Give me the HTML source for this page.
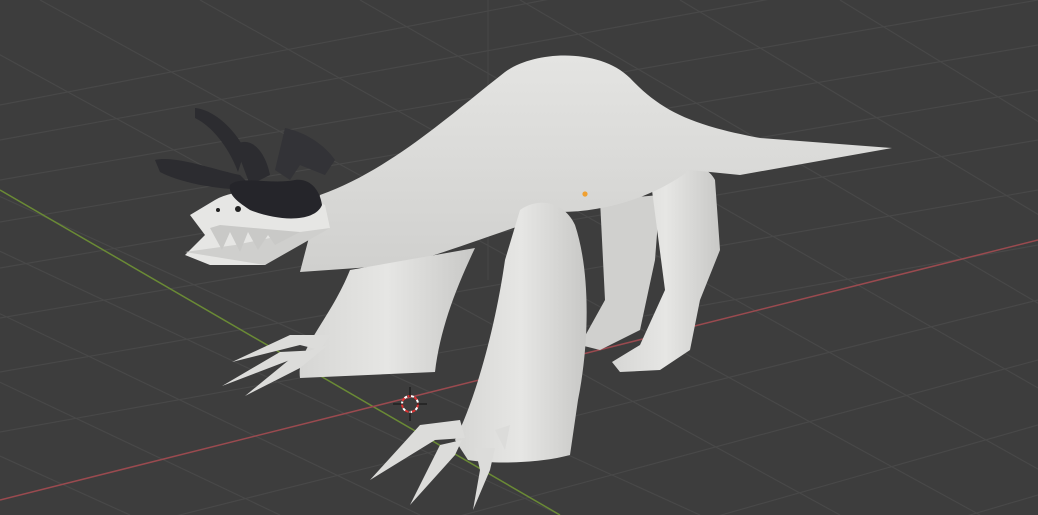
<!DOCTYPE html>
<html><head><meta charset="utf-8"><style>
html,body{margin:0;padding:0;background:#3d3d3d;overflow:hidden;width:1038px;height:515px}
svg{display:block;position:absolute;left:0;top:0}
</style></head><body>
<svg width="1038" height="515" viewBox="0 0 1038 515" xmlns="http://www.w3.org/2000/svg">
<defs>
<linearGradient id="b" x1="0" y1="0" x2="0" y2="1">
<stop offset="0" stop-color="#e4e4e2"/><stop offset="1" stop-color="#d0d0ce"/></linearGradient>
<linearGradient id="l" x1="0" y1="0" x2="1" y2="0">
<stop offset="0" stop-color="#d6d6d4"/><stop offset="0.5" stop-color="#e6e6e4"/><stop offset="1" stop-color="#c8c8c6"/></linearGradient>
</defs>
<rect width="1038" height="515" fill="#3d3d3d"/>
<g stroke="#484848" stroke-width="1.2" fill="none">
<line x1="0" y1="105" x2="1038" y2="-95"/>
<line x1="0" y1="140" x2="1038" y2="-50"/>
<line x1="0" y1="180" x2="1038" y2="0"/>
<line x1="0" y1="222" x2="1038" y2="45"/>
<line x1="0" y1="268" x2="1038" y2="90"/>
<line x1="0" y1="318" x2="1038" y2="140"/>
<line x1="0" y1="372" x2="1038" y2="190"/>
<line x1="0" y1="432" x2="1038" y2="245"/>
<line x1="0" y1="560" x2="1038" y2="300"/>
<line x1="0" y1="640" x2="1038" y2="360"/>
<line x1="0" y1="720" x2="1038" y2="425"/>
<line x1="0" y1="800" x2="1038" y2="495"/>
<line x1="0" y1="880" x2="1038" y2="570"/>
<line x1="-300" y1="60" x2="700" y2="515"/>
<line x1="-300" y1="110" x2="560" y2="515"/>
<line x1="-300" y1="170" x2="420" y2="515"/>
<line x1="-300" y1="240" x2="280" y2="515"/>
<line x1="-300" y1="320" x2="130" y2="515"/>
<line x1="-100" y1="0" x2="840" y2="515"/>
<line x1="40" y1="0" x2="980" y2="515"/>
<line x1="200" y1="0" x2="1120" y2="515"/>
<line x1="360" y1="0" x2="1260" y2="515"/>
<line x1="520" y1="0" x2="1400" y2="515"/>
<line x1="680" y1="0" x2="1540" y2="515"/>
<line x1="840" y1="0" x2="1680" y2="515"/>
</g>
<line x1="488" y1="0" x2="488" y2="280" stroke="#474747" stroke-width="1"/>
<line x1="0" y1="190" x2="560" y2="515" stroke="#6a8a35" stroke-width="1.5"/>
<line x1="0" y1="500" x2="1038" y2="240" stroke="#9a4a4f" stroke-width="1.5"/>

<path d="M600,200 L660,195 L655,260 L640,330 L600,350 L580,345 L605,300 Z" fill="#d0d0ce"/>
<path d="M650,175 C670,160 705,160 715,180 L720,250 L700,300 L690,350 L660,370 L620,372 L612,362 L640,345 L665,290 Z" fill="url(#l)"/>

<path d="M320,195 C390,170 450,115 505,72 C535,50 600,48 630,78 C660,110 690,125 760,138 L892,148 L740,175 L690,170 C650,200 600,212 560,212 C500,232 440,255 400,265 L300,272 Z" fill="url(#b)"/>

<path d="M350,270 L475,248 C455,290 440,330 435,372 L300,378 C296,350 330,320 350,270 Z" fill="url(#l)"/>
<g fill="#dcdcda">
<path d="M330,335 L290,335 L232,362 L300,345 L320,350 Z"/>
<path d="M320,350 L280,352 L222,386 L290,360 Z"/>
<path d="M328,345 L295,355 L245,396 L300,368 Z"/>
</g>

<path d="M215,200 C240,185 290,190 325,205 L330,228 L300,240 L265,265 L210,265 L185,255 L205,235 L190,215 Z" fill="#e6e6e4"/>
<path d="M185,252 L265,265 L330,228 L300,232 L235,245 Z" fill="#cfcfcd"/>
<path d="M210,228 L222,250 L230,232 L240,252 L248,232 L258,250 L268,235 L275,245 L300,232 L220,225 Z" fill="#c9c9c7"/>
<circle cx="218" cy="210" r="2" fill="#222"/><circle cx="238" cy="209" r="3" fill="#222"/>
<g fill="#2c2c30">
<path d="M155,160 C175,155 215,170 240,175 L255,190 C225,190 185,185 160,172 Z"/>
<path d="M195,108 C215,110 235,130 245,150 L238,172 C228,145 210,125 195,118 Z"/>
<path d="M235,145 C250,135 265,150 270,175 L250,185 Z"/>
<path d="M285,128 C305,132 325,145 335,160 L325,175 L300,165 L290,180 L275,170 Z" fill="#333337"/>
<path d="M230,185 C240,175 270,185 295,180 C310,178 320,190 322,205 C315,222 280,222 250,210 C238,202 228,195 230,185 Z" fill="#25252a"/>
</g>

<path d="M520,210 C540,196 565,203 575,225 C590,270 590,340 578,400 L570,455 C545,462 500,465 468,460 L455,440 C475,400 495,330 505,260 Z" fill="url(#l)"/>
<g fill="#dcdcda">
<path d="M460,420 L420,425 L370,480 L435,440 L465,438 Z"/>
<path d="M462,440 L440,445 L410,505 L455,455 Z"/>
<path d="M475,448 L480,470 L473,510 L490,470 L495,448 Z"/>
<path d="M495,430 L510,425 L505,450 Z"/>
</g>

<circle cx="585" cy="194" r="2.6" fill="#f0a030"/>
<circle cx="410" cy="404" r="8" fill="none" stroke="#d33" stroke-width="2" stroke-dasharray="4 3"/>
<circle cx="410" cy="404" r="8" fill="none" stroke="#fff" stroke-width="2" stroke-dasharray="3 4" stroke-dashoffset="3.5"/>
<g stroke="#111" stroke-width="1"><line x1="410" y1="387" x2="410" y2="397"/><line x1="410" y1="411" x2="410" y2="421"/><line x1="393" y1="404" x2="403" y2="404"/><line x1="417" y1="404" x2="427" y2="404"/></g>
</svg>
</body></html>
